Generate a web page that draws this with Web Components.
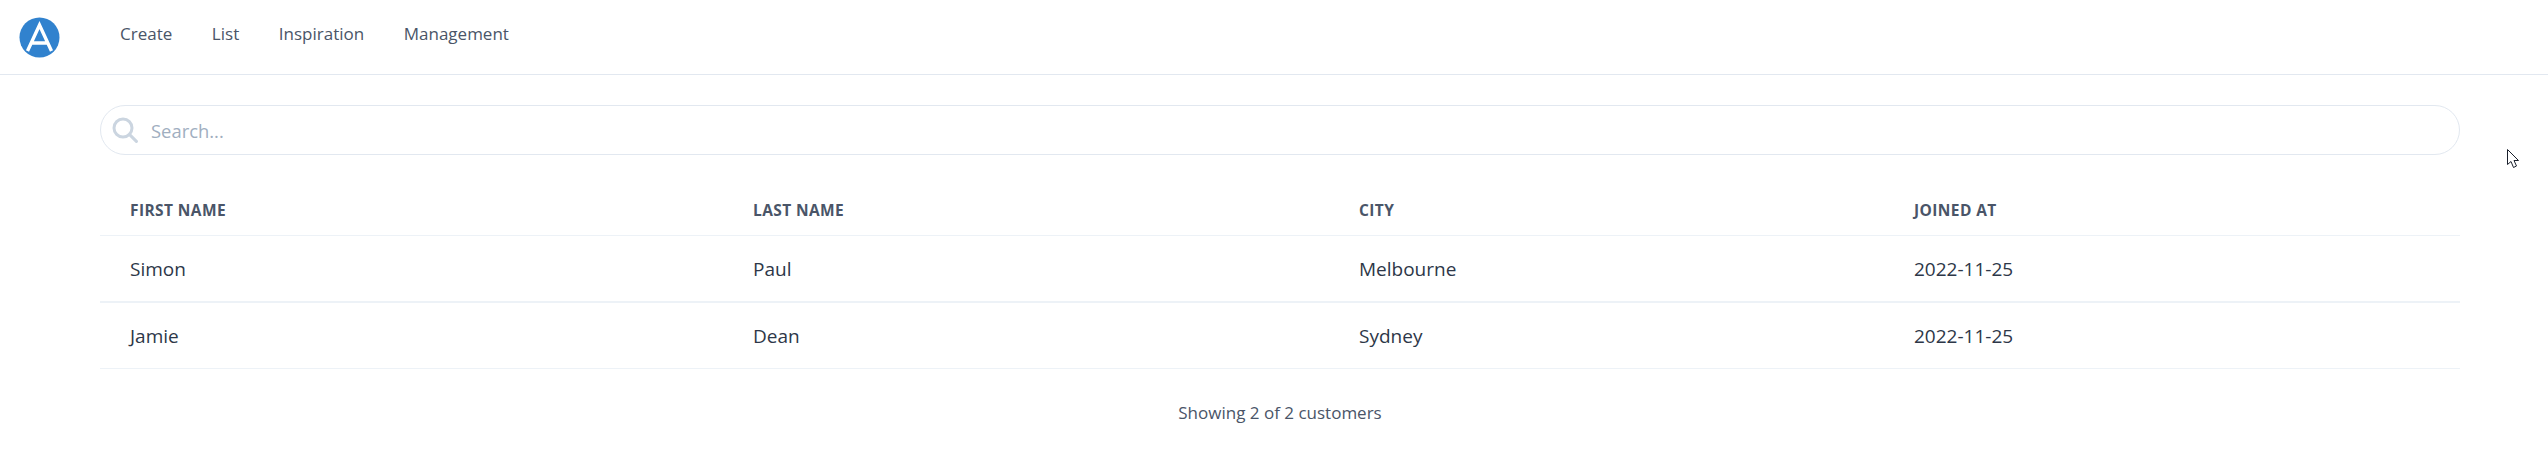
<!DOCTYPE html>
<html>
<head>
<meta charset="utf-8">
<title>Customers</title>
<style>
  html, body { margin: 0; background: #fff; }
  body { font-family: "Open Sans", "Noto Sans", sans-serif; color: #2d3748; overflow: hidden; }
</style>
</head>
<body>
<app-navbar>
  <nav-link>Create</nav-link>
  <nav-link>List</nav-link>
  <nav-link>Inspiration</nav-link>
  <nav-link>Management</nav-link>
</app-navbar>
<customer-page>
  <search-box placeholder="Search..."></search-box>
  <customer-table>
    <table-row head>
      <span>First name</span><span>Last name</span><span>City</span><span>Joined at</span>
    </table-row>
    <table-row thick>
      <span>Simon</span><span>Paul</span><span>Melbourne</span><span>2022-11-25</span>
    </table-row>
    <table-row>
      <span>Jamie</span><span>Dean</span><span>Sydney</span><span>2022-11-25</span>
    </table-row>
  </customer-table>
  <table-footer>Showing 2 of 2 customers</table-footer>
</customer-page>
<mouse-pointer></mouse-pointer>

<script>
function define(name, html, props) {
  const template = document.createElement("template");
  template.innerHTML = html;
  customElements.define(name, class extends HTMLElement {
    constructor() {
      super();
      this.attachShadow({ mode: "open" });
      this.shadowRoot.appendChild(template.content.cloneNode(true));
      if (props) props(this);
    }
  });
}

define("app-navbar", `
  <style>
    :host { display: flex; align-items: center; height: 74px; border-bottom: 1px solid #e2e8f0; padding-left: 19px; }
    svg { display: block; width: 41px; height: 41px; margin-right: 60px; flex: none; }
    .links { display: flex; gap: 39.6px; margin-top: -6px; }
  </style>
  <svg viewBox="0 0 41 41">
    <circle cx="20.5" cy="20.5" r="20" fill="#3182ce"/>
    <path d="M8.5 34 L20.5 8 L32.5 34 M12.5 26 H28.5" fill="none" stroke="#fff" stroke-width="3.4"/>
  </svg>
  <div class="links"><slot></slot></div>
`);

define("nav-link", `
  <style>
    :host { display: block; font-size: 17px; line-height: 24px; color: #4a5568; }
  </style>
  <slot></slot>
`);

define("customer-page", `
  <style>
    :host { display: block; padding: 30px 88px 0 100px; }
  </style>
  <slot></slot>
`);

define("search-box", `
  <style>
    :host { display: flex; align-items: center; height: 50px; box-sizing: border-box; border: 1px solid #e2e8f0; border-radius: 25px; padding-left: 11px; background: #fff; }
    svg { width: 26px; height: 26px; flex: none; margin-right: 13px; }
    input { flex: 1; border: 0; outline: 0; padding: 2px 0 0; background: none; font: 18.4px/24px "Open Sans", "Noto Sans", sans-serif; color: #2d3748; }
    input::placeholder { color: #a0aec0; opacity: 1; }
  </style>
  <svg viewBox="0 0 26 26" fill="none" stroke="#cbd5e0" stroke-width="3">
    <circle cx="11" cy="11" r="9"/>
    <path d="M17.6 17.6 L24.4 24.4" stroke-linecap="round"/>
  </svg>
  <input type="text">
`, el => {
  el.shadowRoot.querySelector("input").placeholder = el.getAttribute("placeholder");
});

define("customer-table", `
  <style>
    :host { display: block; margin-top: 30px; }
  </style>
  <slot></slot>
`);

define("table-row", `
  <style>
    :host { display: grid; grid-template-columns: 623px 606px 555px 576px; align-items: center; height: 66px; box-sizing: border-box; border-bottom: 1px solid #edf2f7; font-size: 19px; color: #2d3748; }
    :host([head]) { height: 51px; font-size: 15.5px; font-weight: 700; letter-spacing: .4px; text-transform: uppercase; color: #4a5568; }
    :host([thick]) { height: 67px; border-bottom-width: 2px; }
    ::slotted(span) { padding-left: 30px; }
  </style>
  <slot></slot>
`);

define("table-footer", `
  <style>
    :host { display: block; text-align: center; margin-top: 32px; font-size: 17px; line-height: 24px; color: #4a5568; }
  </style>
  <slot></slot>
`);

define("mouse-pointer", `
  <style>
    :host { position: absolute; left: 2507px; top: 149px; width: 14px; height: 20px; }
    svg { display: block; }
  </style>
  <svg width="14" height="20" viewBox="0 0 14 20">
    <path d="M.5.5 V15.5 L4 12.5 L6.5 18.5 L9.5 17 L7 11.5 H11.5 Z" fill="#fff" stroke="#1a202c" stroke-width="1"/>
  </svg>
`);
</script>
</body>
</html>
